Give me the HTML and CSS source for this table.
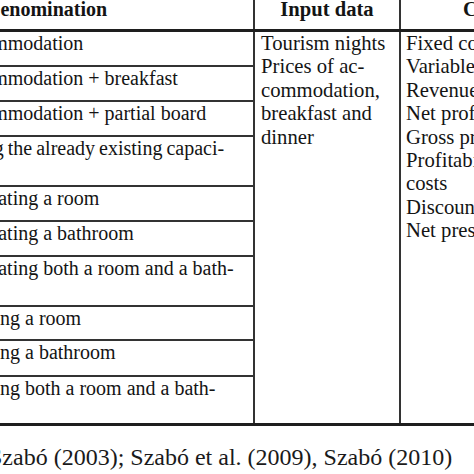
FILE: index.html
```html
<!DOCTYPE html>
<html>
<head>
<meta charset="utf-8">
<link rel="stylesheet" href="styles.css">
</head>
<body>
<div class="tbl">
  <div class="head">
    <div class="hc hc1">Denomination</div>
    <div class="hc hc2">Input data</div>
    <div class="hc hc3">Calculated data</div>
  </div>
  <div class="body">
    <div class="col1">
      <div class="row r35">Accommodation</div>
      <div class="row r35">Accommodation + breakfast</div>
      <div class="row r35">Accommodation + partial board</div>
      <div class="row r50 tight">Using the already existing capaci-<br>ties</div>
      <div class="row r35 left">Renovating a room</div>
      <div class="row r35 left">Renovating a bathroom</div>
      <div class="row r50 left">Renovating both a room and a bath-<br>room</div>
      <div class="row r34">Building a room</div>
      <div class="row r36">Building a bathroom</div>
      <div class="row r46 last">Building both a room and a bath-<br>room</div>
    </div>
    <div class="col2">Tourism nights<br>Prices of ac-<br>commodation,<br>breakfast and<br>dinner</div>
    <div class="col3">Fixed costs<br>Variable costs<br>Revenue<br>Net profit<br>Gross profit<br>Profitability of variable<br>costs<br>Discounted cash flow<br>Net present value</div>
  </div>
</div>
<div class="foot">Szabó (2003); Szabó et al. (2009), Szabó (2010)</div>
</body>
</html>
```
FILE: styles.css
```css
html, body {
  margin: 0;
  padding: 0;
  overflow: hidden;
  background: #fff;
  width: 474px;
  height: 474px;
}
body {
  font-family: "Liberation Serif", "Times New Roman", serif;
  color: #141414;
  font-size: 20px;
}
.tbl {
  width: 800px;
  margin-left: -60px;
  margin-top: -2px;
}
.head {
  display: grid;
  grid-template-columns: 315px 146px 1fr;
  height: 34px;
  box-sizing: border-box;
  border-bottom: 3px solid #1e1e1e;
}
.hc {
  font-weight: bold;
  line-height: 22px;
  white-space: nowrap;
  box-sizing: border-box;
}
.hc1 {
  padding-left: 46px;
  border-right: 2px solid #333;
}
.hc2 {
  text-align: center;
  font-size: 20.6px;
  border-right: 2px solid #333;
}
.hc3 {
  padding-left: 62px;
  font-size: 20.6px;
}
.body {
  display: grid;
  grid-template-columns: 315px 146px 1fr;
  border-bottom: 3px solid #1e1e1e;
}
.col1 {
  border-right: 2px solid #333;
  display: flex;
  flex-direction: column;
}
.row {
  box-sizing: border-box;
  border-bottom: 2px solid #333;
  padding-left: 10px;
  line-height: 22px;
  white-space: nowrap;
  overflow: hidden;
}
.row.tight {
  padding-left: 16px;
  word-spacing: -1px;
}
.row.left {
  padding-left: 6px;
}
.row.last { border-bottom: none; }
.r34 { height: 34px; }
.r35 { height: 35px; }
.r36 { height: 36px; }
.r46 { height: 46px; }
.r50 { height: 50px; }
.col2 {
  box-sizing: border-box;
  border-right: 2px solid #333;
  padding-left: 6px;
  font-size: 20.7px;
  line-height: 23.4px;
  white-space: nowrap;
  overflow: hidden;
}
.col3 {
  padding-left: 5px;
  font-size: 20.7px;
  line-height: 23.4px;
  white-space: nowrap;
  overflow: hidden;
}
.foot {
  margin-top: 18px;
  margin-left: -11px;
  font-size: 24px;
  line-height: 27px;
  white-space: nowrap;
  color: #1a1a1a;
}
```
